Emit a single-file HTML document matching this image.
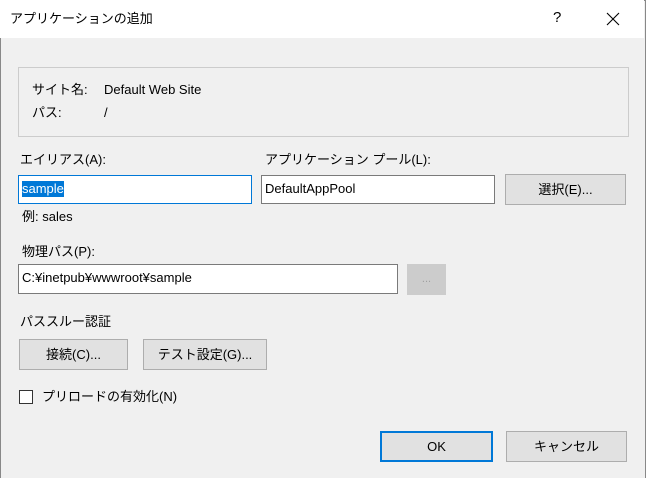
<!DOCTYPE html>
<html><head><meta charset="utf-8"><style>
*{box-sizing:border-box;margin:0;padding:0}
body{width:646px;height:478px;background:#f0f0f0;font-family:"Liberation Sans","Noto Sans CJK JP",sans-serif;font-size:13px;color:#000;position:relative;overflow:hidden}
.win{position:absolute;left:0;top:0;width:646px;height:478px;border:1px solid #888;border-bottom:none}
.title{position:absolute;left:0;top:0;width:644px;height:38px;background:#fff}
.a{position:absolute;white-space:nowrap;line-height:16px}
.box{position:absolute;border:1px solid #ccc}
.inp{position:absolute;background:#fff;border:1px solid #7a7a7a;padding-left:3px;line-height:26px}
.btn{position:absolute;background:#e1e1e1;border:1px solid #adadad;text-align:center}
</style></head><body>
<div class="win"></div>
<div class="title"></div>
<div class="a" style="left:10px;top:11px;font-size:13px">アプリケーションの追加</div>
<div class="a" style="left:553px;top:10px;font-size:15px">?</div>
<svg style="position:absolute;left:606px;top:12px" width="14" height="14"><path d="M1 1L13 13M13 1L1 13" stroke="#000" stroke-width="1.1"/></svg>
<div class="box" style="left:18px;top:67px;width:611px;height:70px"></div>
<div class="a" style="left:32px;top:82px">サイト名:</div>
<div class="a" style="left:104px;top:82px">Default Web Site</div>
<div class="a" style="left:32px;top:105px">パス:</div>
<div class="a" style="left:104px;top:105px">/</div>
<div class="a" style="left:20px;top:152px">エイリアス(A):</div>
<div class="a" style="left:265px;top:152px">アプリケーション プール(L):</div>
<div class="inp" style="left:18px;top:175px;width:234px;height:29px;border-color:#0078d7"><span style="background:#0078d7;color:#fff;line-height:16px;display:inline-block">sample</span></div>
<div class="inp" style="left:261px;top:175px;width:234px;height:29px">DefaultAppPool</div>
<div class="btn" style="left:505px;top:174px;width:121px;height:31px;line-height:29px">選択(E)...</div>
<div class="a" style="left:22px;top:209px">例: sales</div>
<div class="a" style="left:22px;top:244px">物理パス(P):</div>
<div class="inp" style="left:18px;top:264px;width:380px;height:30px">C:¥inetpub¥wwwroot¥sample</div>
<div class="btn" style="left:407px;top:264px;width:39px;height:31px;line-height:29px;color:#a0a0a0;background:#ccc;border-color:#ccc;font-size:11px">...</div>
<div class="a" style="left:20px;top:314px">パススルー認証</div>
<div class="btn" style="left:19px;top:339px;width:109px;height:31px;line-height:29px">接続(C)...</div>
<div class="btn" style="left:143px;top:339px;width:124px;height:31px;line-height:29px">テスト設定(G)...</div>
<div style="position:absolute;left:19px;top:390px;width:14px;height:14px;border:1px solid #333;background:#fff"></div>
<div class="a" style="left:42px;top:389px">プリロードの有効化(N)</div>
<div class="btn" style="left:380px;top:431px;width:113px;height:31px;line-height:27px;border:2px solid #0078d7">OK</div>
<div class="btn" style="left:506px;top:431px;width:121px;height:31px;line-height:29px">キャンセル</div>
</body></html>
